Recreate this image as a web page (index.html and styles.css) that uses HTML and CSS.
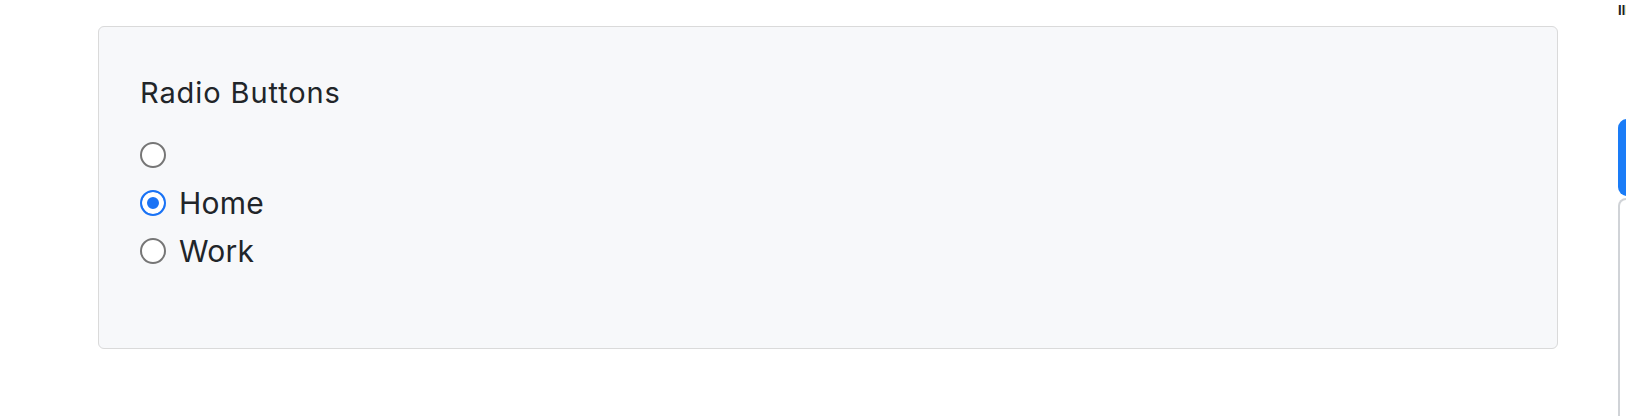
FILE: index.html
```html
<!DOCTYPE html>
<html lang="en">
<head>
<meta charset="utf-8">
<title>Radio Buttons</title>
<link rel="stylesheet" href="styles.css">
</head>
<body>
<div class="page">
  <main class="main">
    <fieldset class="card">
      <h5 class="card-title">Radio Buttons</h5>
      <div class="options">
        <label class="option"><input type="radio" name="place" class="radio"></label>
        <label class="option"><input type="radio" name="place" class="radio" checked><span class="option-text">Home</span></label>
        <label class="option"><input type="radio" name="place" class="radio"><span class="option-text">Work</span></label>
      </div>
    </fieldset>
  </main>
  <aside class="side">
    <div class="side-title">Illustrations</div>
    <div class="side-button"></div>
    <div class="side-panel"></div>
  </aside>
</div>
</body>
</html>
```
FILE: styles.css
```css
html, body {
  margin: 0;
  padding: 0;
  background: #ffffff;
}
body {
  font-family: Inter, "Noto Sans", sans-serif;
  color: #212529;
}
.page {
  display: flex;
  width: 1626px;
  height: 416px;
  overflow: hidden;
}
.main {
  flex: 0 0 1618px;
  box-sizing: border-box;
  padding: 26px 0 0 98px;
}
.card {
  box-sizing: border-box;
  width: 1460px;
  height: 323px;
  margin: 0;
  border: 1px solid #dadada;
  border-radius: 6px;
  background: #f7f8fa;
  padding: 49px 0 0 41px;
  min-width: 0;
}
.card-title {
  margin: 0;
  font-size: 29px;
  font-weight: 400;
  letter-spacing: 0.9px;
  line-height: 34px;
}
.options {
  display: flex;
  flex-direction: column;
  margin-top: 21px;
}
.option {
  display: flex;
  align-items: center;
  height: 48px;
  gap: 13px;
}
.radio {
  appearance: none;
  -webkit-appearance: none;
  box-sizing: border-box;
  width: 26px;
  height: 26px;
  margin: 0;
  border: 2px solid #767676;
  border-radius: 50%;
  background: #ffffff;
  flex: 0 0 26px;
}
.radio:checked {
  border-color: #1a73f5;
  background: #1a73f5;
  box-shadow: inset 0 0 0 5px #ffffff;
}
.option-text {
  font-size: 30px;
  line-height: 1;
  letter-spacing: 0.2px;
}
.side {
  flex: 0 0 220px;
  display: flex;
  flex-direction: column;
}
.side-title {
  font-size: 13px;
  font-weight: 700;
  line-height: 16px;
  margin-top: 2px;
  color: #222;
}
.side-button {
  margin-top: 101px;
  height: 77px;
  background: #1a7cf7;
  border-radius: 9px;
}
.side-panel {
  margin-top: 2px;
  flex: 1;
  border: 2px solid #d0d3d7;
  border-bottom: none;
  border-radius: 8px 8px 0 0;
}
```
